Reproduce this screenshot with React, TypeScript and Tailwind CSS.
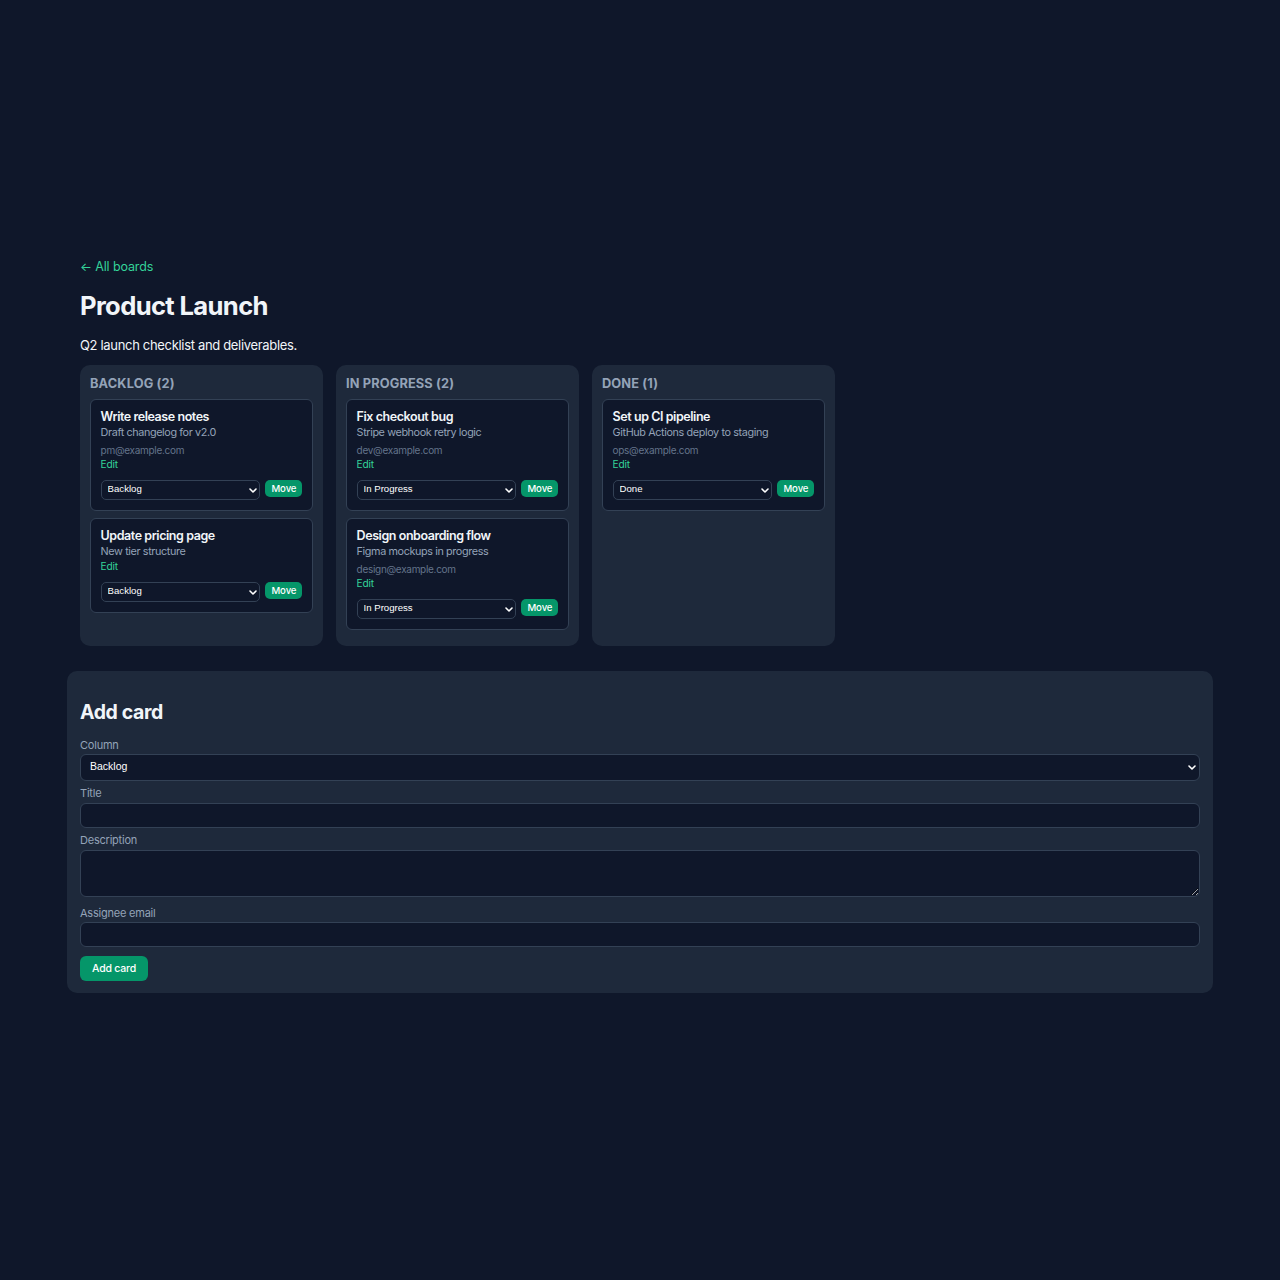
import React from "react";

type Card = { title: string; desc: string; email?: string };
type Column = { name: string; cards: Card[] };

const columns: Column[] = [
  {
    name: "Backlog",
    cards: [
      { title: "Write release notes", desc: "Draft changelog for v2.0", email: "pm@example.com" },
      { title: "Update pricing page", desc: "New tier structure" },
    ],
  },
  {
    name: "In Progress",
    cards: [
      { title: "Fix checkout bug", desc: "Stripe webhook retry logic", email: "dev@example.com" },
      { title: "Design onboarding flow", desc: "Figma mockups in progress", email: "design@example.com" },
    ],
  },
  {
    name: "Done",
    cards: [
      { title: "Set up CI pipeline", desc: "GitHub Actions deploy to staging", email: "ops@example.com" },
    ],
  },
];

function Chevron({ className }: { className: string }) {
  return (
    <svg
      className={className}
      width="8"
      height="5"
      viewBox="0 0 8 5"
      fill="none"
      stroke="white"
      strokeWidth="1.6"
      strokeLinecap="round"
      strokeLinejoin="round"
    >
      <path d="M1 1l3 3 3-3" />
    </svg>
  );
}

function CardView({ card, column }: { card: Card; column: string }) {
  return (
    <div className="rounded-[6px] border border-[#334155] bg-[#0f172a] px-[9.6px] pt-[8px] pb-[10px]">
      <div className="text-[12.5px] leading-[17px] font-semibold tracking-[-0.035em] text-[#f1f5f9]">{card.title}</div>
      <div className="text-[10.8px] leading-[15px] tracking-[-0.035em] text-[#94a3b8]">{card.desc}</div>
      {card.email && (
        <div className="mt-[4px] text-[10px] leading-[13px] tracking-[-0.03em] text-[#64748b]">{card.email}</div>
      )}
      <div className="mt-[1px] text-[10.2px] leading-[13px] tracking-[-0.02em] text-[#34d399]">Edit</div>
      <div className="mt-[9px] flex items-start gap-[5px]">
        <div className="relative flex-1">
          <select
            defaultValue={column}
            className="block h-[20px] w-full appearance-none rounded-[5px] border border-[#334155] bg-[#0f172a] pl-[6px] font-['Liberation_Sans',Arial,sans-serif] text-[9.6px] text-white outline-none"
          >
            <option>Backlog</option>
            <option>In Progress</option>
            <option>Done</option>
          </select>
          <Chevron className="pointer-events-none absolute right-[3px] top-[8px]" />
        </div>
        <button className="h-[17px] rounded-[5px] bg-[#059669] px-[6px] text-[9.6px] leading-[17px] font-medium tracking-[-0.01em] text-white">
          Move
        </button>
      </div>
    </div>
  );
}

export default function App() {
  return (
    <div className="min-h-screen bg-[#0f172a] font-['Inter',sans-serif] text-[#e2e8f0]">
      <div className="mx-auto w-[1120px] pt-[257px] pb-[100px]">
        <a className="block text-[12.5px] leading-[19px] tracking-[-0.01em] text-[#34d399]">← All boards</a>
        <h1 className="mt-[14px] text-[25.6px] leading-[31px] font-bold tracking-[-0.025em] text-[#f1f5f9]">
          Product Launch
        </h1>
        <p className="mt-[14px] text-[13px] leading-[20px] tracking-[-0.025em] text-[#f1f5f9]">
          Q2 launch checklist and deliverables.
        </p>

        <div className="mt-[10px] flex items-stretch gap-[13px]">
          {columns.map((col) => (
            <div key={col.name} className="w-[243px] rounded-[10px] bg-[#1e293b] px-[10px] pt-[11px] pb-[16px]">
              <div className="text-[12.8px] leading-[16px] font-bold uppercase tracking-[0.01em] text-[#94a3b8]">
                {col.name} ({col.cards.length})
              </div>
              <div className="mt-[6.5px] flex flex-col gap-[7px]">
                {col.cards.map((c) => (
                  <CardView key={c.title} card={c} column={col.name} />
                ))}
              </div>
            </div>
          ))}
        </div>

        <div className="-mx-[13px] mt-[25px] rounded-[10px] bg-[#1e293b] px-[13px] pt-[13px] pb-[12px]">
          <h2 className="mt-[16px] text-[19.5px] leading-[24px] font-bold tracking-[-0.02em] text-[#f1f5f9]">Add card</h2>
          <label className="mt-[13px] block text-[11px] leading-[16px] tracking-[-0.02em] text-[#94a3b8]">Column</label>
          <div className="relative mt-[1px]">
            <select
              defaultValue="Backlog"
              className="block h-[27px] w-full appearance-none rounded-[6px] border border-[#334155] bg-[#0f172a] pl-[9px] font-['Liberation_Sans',Arial,sans-serif] text-[10.5px] text-white outline-none"
            >
              <option>Backlog</option>
              <option>In Progress</option>
              <option>Done</option>
            </select>
            <Chevron className="pointer-events-none absolute right-[4px] top-[11px]" />
          </div>
          <label className="mt-[4.5px] block text-[11px] leading-[16px] tracking-[-0.02em] text-[#94a3b8]">Title</label>
          <input className="mt-[1.5px] block h-[25px] w-full rounded-[6px] border border-[#334155] bg-[#0f172a] px-[9px] text-[10.5px] text-white outline-none" />
          <label className="mt-[4.5px] block text-[11px] leading-[16px] tracking-[-0.02em] text-[#94a3b8]">Description</label>
          <textarea className="mt-[1.5px] block h-[47.5px] w-full rounded-[6px] border border-[#334155] bg-[#0f172a] px-[9px] text-[10.5px] text-white outline-none" />
          <label className="mt-[7.5px] block text-[11px] leading-[16px] tracking-[-0.02em] text-[#94a3b8]">Assignee email</label>
          <input className="mt-[1px] block h-[25px] w-full rounded-[6px] border border-[#334155] bg-[#0f172a] px-[9px] text-[10.5px] text-white outline-none" />
          <button className="mt-[9.5px] block h-[25px] w-[68px] rounded-[6px] bg-[#059669] text-[10.5px] font-medium tracking-[-0.02em] text-white">
            Add card
          </button>
        </div>
      </div>
    </div>
  );
}
